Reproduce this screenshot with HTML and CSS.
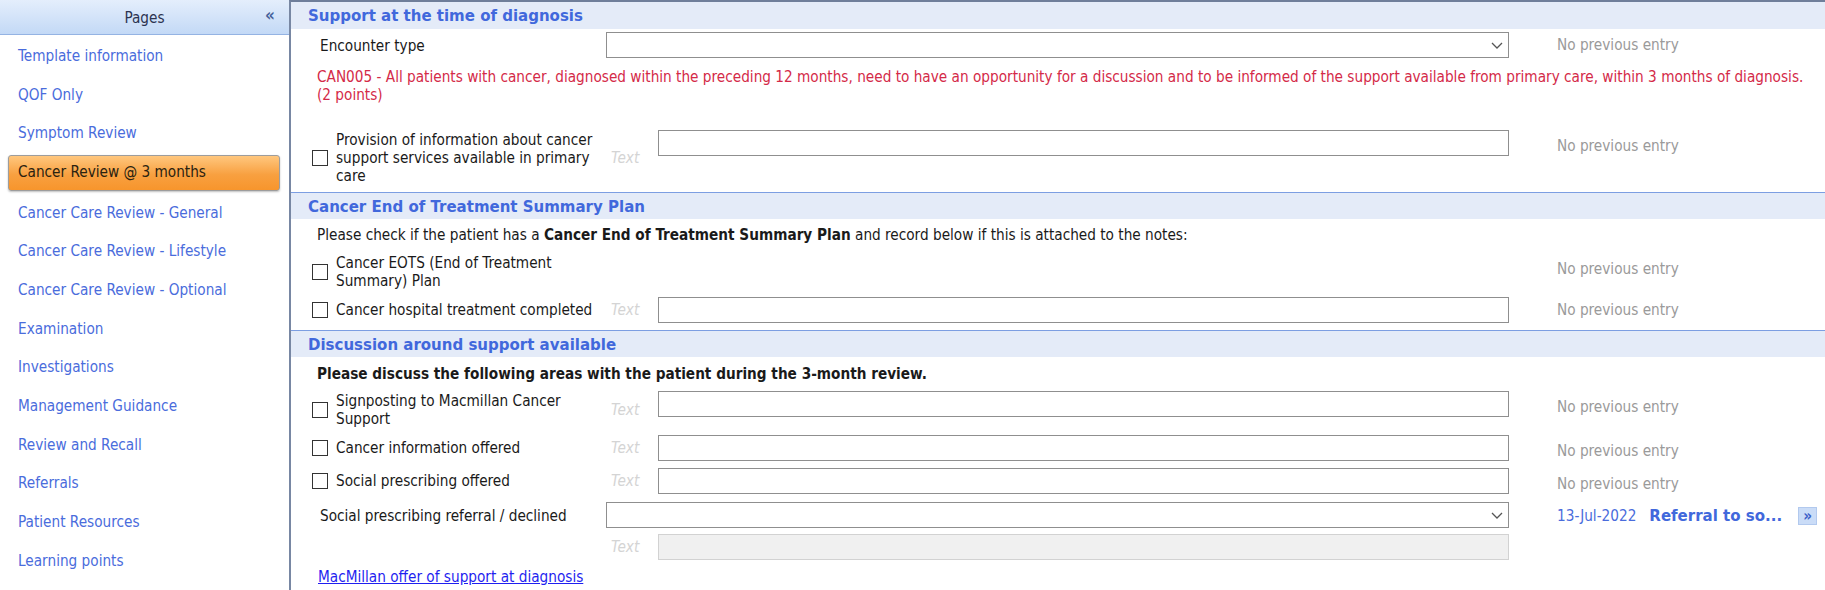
FILE: index.html
```html
<!DOCTYPE html>
<html lang="en">
<head>
  <meta charset="UTF-8">
  <title>Cancer Review @ 3 months</title>
  <link rel="stylesheet" href="styles.css">
</head>
<body>
<div class="app">

  <!-- left page list -->
  <aside class="sidebar">
    <div class="side-head">
      <span class="side-title">Pages</span>
      <span class="collapse">&laquo;</span>
    </div>
    <ul class="pages">
      <li>Template information</li>
      <li>QOF Only</li>
      <li>Symptom Review</li>
      <li class="current">Cancer Review @ 3 months</li>
      <li>Cancer Care Review - General</li>
      <li>Cancer Care Review - Lifestyle</li>
      <li>Cancer Care Review - Optional</li>
      <li>Examination</li>
      <li>Investigations</li>
      <li>Management Guidance</li>
      <li>Review and Recall</li>
      <li>Referrals</li>
      <li>Patient Resources</li>
      <li>Learning points</li>
    </ul>
  </aside>

  <!-- form -->
  <main class="form">

    <section class="group first">
      <h2 class="group-title">Support at the time of diagnosis</h2>

      <div class="row r-encounter">
        <div class="label plain">Encounter type</div>
        <div class="select wide">
          <svg width="12" height="7" viewBox="0 0 12 7"><polyline points="1,1 6,6 11,1" fill="none" stroke="#555" stroke-width="1.3"/></svg>
        </div>
        <div class="prev">No previous entry</div>
      </div>

      <p class="note">CAN005 - All patients with cancer, diagnosed within the preceding 12 months, need to have an opportunity for a discussion and to be informed of the support available from primary care, within 3 months of diagnosis.<br>(2 points)</p>

      <div class="row r-provision">
        <label class="label check"><input type="checkbox"><span>Provision of information about cancer<br>support services available in primary<br>care</span></label>
        <div class="hint">Text</div>
        <div class="field top"></div>
        <div class="prev top">No previous entry</div>
      </div>
    </section>

    <section class="group">
      <h2 class="group-title">Cancer End of Treatment Summary Plan</h2>

      <p class="intro">Please check if the patient has a <b>Cancer End of Treatment Summary Plan</b> and record below if this is attached to the notes:</p>

      <div class="row r-eots">
        <label class="label check"><input type="checkbox"><span>Cancer EOTS (End of Treatment<br>Summary) Plan</span></label>
        <div></div>
        <div></div>
        <div class="prev up">No previous entry</div>
      </div>

      <div class="row r-gap7">
        <label class="label check"><input type="checkbox"><span>Cancer hospital treatment completed</span></label>
        <div class="hint">Text</div>
        <div class="field"></div>
        <div class="prev">No previous entry</div>
      </div>
    </section>

    <section class="group">
      <h2 class="group-title">Discussion around support available</h2>

      <p class="intro strong">Please discuss the following areas with the patient during the 3-month review.</p>

      <div class="row r-signpost">
        <label class="label check"><input type="checkbox"><span>Signposting to Macmillan Cancer<br>Support</span></label>
        <div class="hint">Text</div>
        <div class="field top"></div>
        <div class="prev top">No previous entry</div>
      </div>

      <div class="row r-gap7">
        <label class="label check"><input type="checkbox"><span>Cancer information offered</span></label>
        <div class="hint">Text</div>
        <div class="field"></div>
        <div class="prev low">No previous entry</div>
      </div>

      <div class="row r-gap7">
        <label class="label check"><input type="checkbox"><span>Social prescribing offered</span></label>
        <div class="hint">Text</div>
        <div class="field"></div>
        <div class="prev low">No previous entry</div>
      </div>

      <div class="row r-gap8">
        <div class="label plain">Social prescribing referral / declined</div>
        <div class="select wide">
          <svg width="12" height="7" viewBox="0 0 12 7"><polyline points="1,1 6,6 11,1" fill="none" stroke="#555" stroke-width="1.3"/></svg>
        </div>
        <div class="prev last">
          <span class="date">13-Jul-2022</span>
          <span class="last-value">Referral to so...</span>
          <span class="more">&raquo;</span>
        </div>
      </div>

      <div class="row r-gap6">
        <div></div>
        <div class="hint">Text</div>
        <div class="field disabled"></div>
        <div></div>
      </div>

      <a class="link" href="#">MacMillan offer of support at diagnosis</a>
    </section>

  </main>
</div>
</body>
</html>
```

FILE: styles.css
```css
body {
  margin: 0;
  font-family: "DejaVu Sans Condensed", "DejaVu Sans", sans-serif;
  font-size: 15.2px;
  color: #1a1a1a;
  background: #fff;
}

.app {
  display: flex;
  height: 590px;
  overflow: hidden;
}

/* sidebar */

.sidebar {
  width: 289px;
  flex: none;
}

.side-head {
  height: 34px;
  display: flex;
  align-items: center;
  justify-content: center;
  position: relative;
  background: linear-gradient(#e4eefc, #c3d9f6);
  border-bottom: 1px solid #94b3e3;
}

.side-title {
  color: #2c3350;
  font-size: 15.2px;
  padding-top: 2px;
}

.collapse {
  position: absolute;
  right: 14px;
  top: 5px;
  color: #44609a;
  font-weight: bold;
  font-size: 17px;
}

.pages {
  list-style: none;
  margin: 0;
  padding: 4px 0 0;
}

.pages li {
  height: 34px;
  line-height: 35px;
  margin: 0 9px 4.67px 8px;
  padding-left: 10px;
  color: #4a6cdc;
}

.pages li.current {
  padding-left: 9px;
  line-height: 32px;
  color: #2a2210;
  border: 1px solid #9d9d9d;
  border-radius: 3px;
  background: linear-gradient(#ffc77e, #f8a040 55%, #f7952c);
  box-shadow: 0 1px 2px rgba(0, 0, 0, 0.25);
}

/* form */

.form {
  flex: 1;
  border-left: 2px solid #7887a3;
  border-top: 2px solid #6f7e9a;
}

.group {
  border-top: 1px solid #7c9ee2;
  padding-bottom: 7px;
}

.group.first {
  border-top: none;
}

.group-title {
  margin: 0;
  height: 26px;
  line-height: 28px;
  padding-left: 17px;
  background: #e4ebf8;
  color: #4168dc;
  font-family: "DejaVu Sans", sans-serif;
  font-size: 15px;
  font-weight: bold;
  overflow: hidden;
}

.group.first .group-title {
  height: 27px;
  line-height: 29px;
}

.row {
  display: grid;
  grid-template-columns: 294px 52px 851px 1fr;
  align-items: center;
  padding-left: 21px;
}

.r-encounter { margin-top: 3px; }
.r-provision { margin-top: 27px; }
.r-eots { margin-top: 10px; }
.r-signpost { margin-top: 9px; }
.r-gap6 { margin-top: 6px; }
.r-gap7 { margin-top: 7px; }
.r-gap8 { margin-top: 8px; }

.label {
  line-height: 18px;
  white-space: nowrap;
}

.label.plain {
  padding-left: 8px;
  padding-top: 2px;
}

.label.check {
  display: flex;
  align-items: center;
  gap: 8px;
}

.label.check input {
  appearance: none;
  margin: 0;
  width: 16px;
  height: 16px;
  flex: none;
  border: 1px solid #333;
  background: #fff;
}

.hint {
  padding-left: 5px;
  color: #d4d4d4;
  font-style: italic;
}

.field {
  height: 24px;
  border: 1px solid #8f8f8f;
  background: #fff;
}

.field.top {
  align-self: start;
  margin-top: -1px;
}

.field.disabled {
  border-color: #d2d2d2;
  background: #f0f0f0;
}

.select {
  height: 24px;
  border: 1px solid #8f8f8f;
  background: #fff;
  display: flex;
  align-items: center;
  justify-content: flex-end;
  padding-right: 5px;
}

.select.wide {
  grid-column: 2 / 4;
}

.prev {
  padding-left: 48px;
  color: #9a9a9a;
  white-space: nowrap;
}

.prev.top {
  align-self: start;
  padding-top: 6px;
}

.prev.low {
  padding-top: 6px;
}

.prev.up {
  padding-bottom: 6px;
}

.prev.last {
  display: flex;
  align-items: center;
  padding-top: 2px;
}

.date {
  color: #4a6cdc;
}

.last-value {
  margin-left: 13px;
  color: #4168dc;
  font-family: "DejaVu Sans", sans-serif;
  font-weight: bold;
  font-size: 15px;
}

.more {
  margin-left: 16px;
  width: 19px;
  height: 18px;
  line-height: 16px;
  text-align: center;
  color: #3d5fc8;
  font-weight: bold;
  background: #cadcf7;
  border: 1px solid #b2c9ee;
  box-sizing: border-box;
}

.note {
  margin: 10px 0 0;
  padding-left: 26px;
  line-height: 18px;
  color: #d42a48;
}

.intro {
  margin: 7px 0 0;
  padding-left: 26px;
  line-height: 18px;
}

.intro.strong {
  margin-top: 8px;
  font-weight: bold;
}

.link {
  display: block;
  margin: 8px 0 0 27px;
  line-height: 18px;
  color: #1f1ff0;
}
```
